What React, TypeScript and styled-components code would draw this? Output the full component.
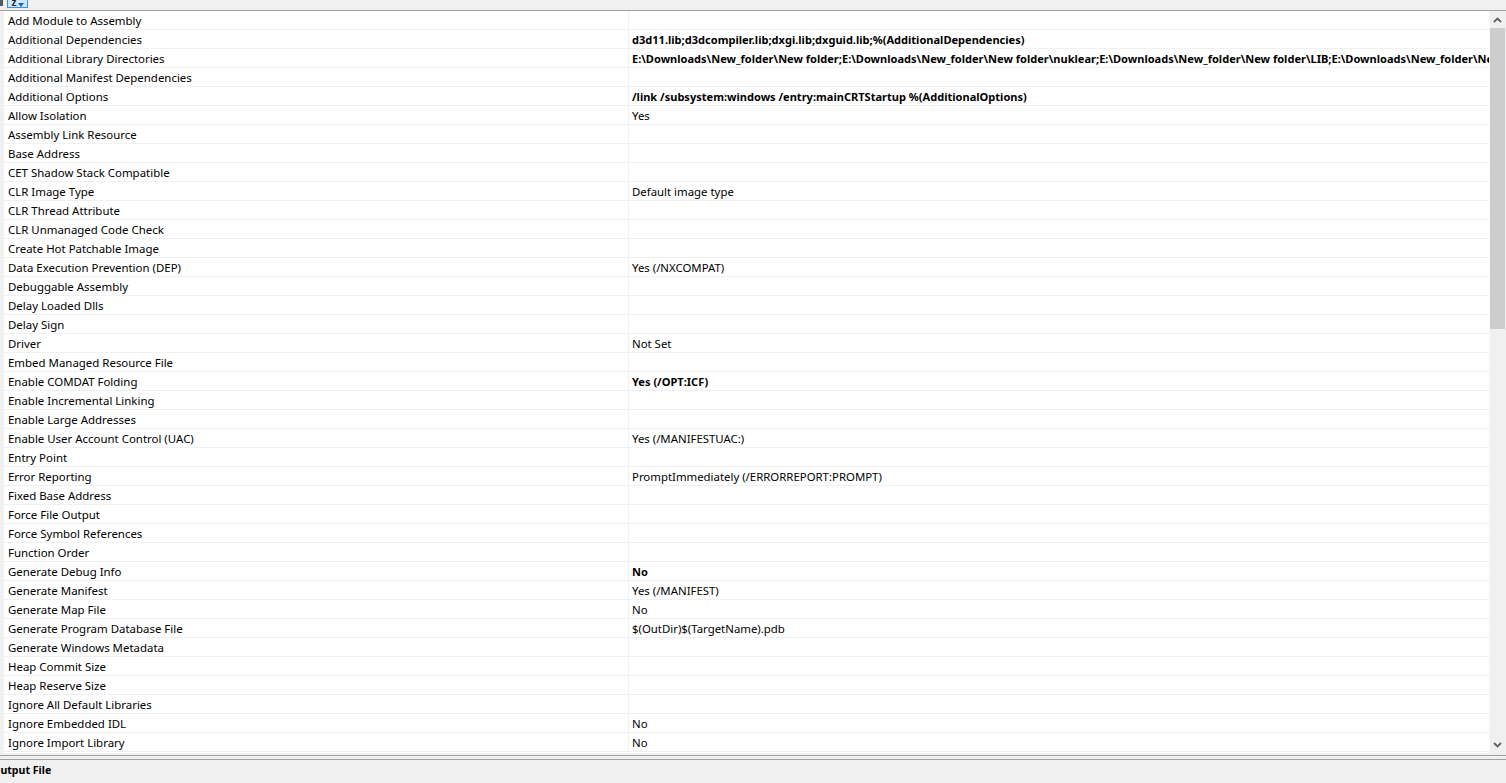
import styled, { createGlobalStyle } from "styled-components";

const GlobalStyle = createGlobalStyle`
  html, body {
    margin: 0;
    padding: 0;
    overflow: hidden;
    background: #f0f0f0;
  }
  * {
    box-sizing: border-box;
  }
`;

type Prop = { name: string; value?: string; bold?: boolean };

const props: Prop[] = [
  { name: "Add Module to Assembly" },
  { name: "Additional Dependencies", value: "d3d11.lib;d3dcompiler.lib;dxgi.lib;dxguid.lib;%(AdditionalDependencies)", bold: true },
  {
    name: "Additional Library Directories",
    value:
      "E:\\Downloads\\New_folder\\New folder;E:\\Downloads\\New_folder\\New folder\\nuklear;E:\\Downloads\\New_folder\\New folder\\LIB;E:\\Downloads\\New_folder\\New folder\\include;%(AdditionalLibraryDirectories)",
    bold: true,
  },
  { name: "Additional Manifest Dependencies" },
  { name: "Additional Options", value: "/link /subsystem:windows /entry:mainCRTStartup %(AdditionalOptions)", bold: true },
  { name: "Allow Isolation", value: "Yes" },
  { name: "Assembly Link Resource" },
  { name: "Base Address" },
  { name: "CET Shadow Stack Compatible" },
  { name: "CLR Image Type", value: "Default image type" },
  { name: "CLR Thread Attribute" },
  { name: "CLR Unmanaged Code Check" },
  { name: "Create Hot Patchable Image" },
  { name: "Data Execution Prevention (DEP)", value: "Yes (/NXCOMPAT)" },
  { name: "Debuggable Assembly" },
  { name: "Delay Loaded Dlls" },
  { name: "Delay Sign" },
  { name: "Driver", value: "Not Set" },
  { name: "Embed Managed Resource File" },
  { name: "Enable COMDAT Folding", value: "Yes (/OPT:ICF)", bold: true },
  { name: "Enable Incremental Linking" },
  { name: "Enable Large Addresses" },
  { name: "Enable User Account Control (UAC)", value: "Yes (/MANIFESTUAC:)" },
  { name: "Entry Point" },
  { name: "Error Reporting", value: "PromptImmediately (/ERRORREPORT:PROMPT)" },
  { name: "Fixed Base Address" },
  { name: "Force File Output" },
  { name: "Force Symbol References" },
  { name: "Function Order" },
  { name: "Generate Debug Info", value: "No", bold: true },
  { name: "Generate Manifest", value: "Yes (/MANIFEST)" },
  { name: "Generate Map File", value: "No" },
  { name: "Generate Program Database File", value: "$(OutDir)$(TargetName).pdb" },
  { name: "Generate Windows Metadata" },
  { name: "Heap Commit Size" },
  { name: "Heap Reserve Size" },
  { name: "Ignore All Default Libraries" },
  { name: "Ignore Embedded IDL", value: "No" },
  { name: "Ignore Import Library", value: "No" },
];

const Page = styled.div`
  width: 1506px;
  height: 783px;
  display: flex;
  flex-direction: column;
  background: #f0f0f0;
  font-family: "Noto Sans", "Open Sans", sans-serif;
  font-size: 11.45px;
  color: #000;
  overflow: hidden;
`;

const Toolbar = styled.div`
  height: 11px;
  flex: none;
  display: flex;
  align-items: flex-start;
  gap: 4px;
  border-bottom: 1px solid #a0a0a0;
  overflow: hidden;
`;

const ToolEdge = styled.div`
  width: 3px;
  height: 6px;
  background: #5a5a5a;
`;

const ToolButton = styled.div`
  width: 21px;
  height: 9px;
  margin-top: -1px;
  display: flex;
  align-items: flex-end;
  justify-content: center;
  gap: 1px;
  background: #cce8ff;
  border: 1px solid #3d8ee8;
  border-top: none;
  font-family: "Liberation Sans", sans-serif;
  font-weight: bold;
  font-size: 10px;
  line-height: 8px;
  color: #222;
`;

const Body = styled.div`
  flex: none;
  height: 742px;
  display: flex;
`;

const Gutter = styled.div`
  width: 4px;
  flex: none;
  background: #f0f0f0;
`;

const Grid = styled.div`
  width: 1486px;
  flex: none;
  background: #fff;
  overflow: hidden;
  border-right: 1px solid #f7f7f7;
`;

const Row = styled.div`
  display: grid;
  grid-template-columns: 625px 1fr;
  height: 19px;
  border-bottom: 1px solid #f0f1f5;
`;

const NameCell = styled.div`
  padding: 1px 0 0 4px;
  line-height: 17px;
  white-space: nowrap;
  overflow: hidden;
  border-right: 1px solid #f0f1f5;
`;

const ValueCell = styled.div<{ $bold?: boolean }>`
  padding: 1px 0 0 3px;
  line-height: 17px;
  white-space: nowrap;
  overflow: hidden;
  font-weight: ${(p) => (p.$bold ? 700 : 400)};
  font-size: ${(p) => (p.$bold ? "11.05px" : "11.4px")};
`;

const Scrollbar = styled.div`
  width: 15px;
  flex: none;
  display: flex;
  flex-direction: column;
  background: #f0f0f0;
`;

const ArrowButton = styled.div`
  height: 17px;
  flex: none;
  display: flex;
  align-items: center;
  justify-content: center;
`;

const Thumb = styled.div`
  height: 301px;
  flex: none;
  background: #cdcdcd;
`;

const Track = styled.div`
  flex: 1;
`;

const Splitter = styled.div`
  flex: none;
  height: 5px;
  margin-top: 2px;
  border-top: 1px solid #a0a0a0;
  border-bottom: 1px solid #a0a0a0;
  background: #f0f0f0;
`;

const Description = styled.div`
  flex: 1;
  padding-top: 2px;
  background: #f0f0f0;
  overflow: hidden;
`;

const DescTitle = styled.div`
  margin-left: -8px;
  font-weight: 700;
  font-size: 10.6px;
  line-height: 16px;
  white-space: nowrap;
`;

const Chevron = ({ up }: { up?: boolean }) => (
  <svg width="9" height="6" viewBox="0 0 9 6">
    <path
      d={up ? "M1 5 L4.5 1.5 L8 5" : "M1 1 L4.5 4.5 L8 1"}
      fill="none"
      stroke="#606060"
      strokeWidth="1.8"
    />
  </svg>
);

export default function App() {
  return (
    <>
      <GlobalStyle />
      <Page>
        <Toolbar>
          <ToolEdge />
          <ToolButton>
            <span>z</span>
            <svg width="6" height="4" viewBox="0 0 6 4">
              <path d="M0 0 L6 0 L3 4 Z" fill="#1e5fb4" />
            </svg>
          </ToolButton>
        </Toolbar>
        <Body>
          <Gutter />
          <Grid>
            {props.map((p) => (
              <Row key={p.name}>
                <NameCell>{p.name}</NameCell>
                <ValueCell $bold={p.bold}>{p.value ?? ""}</ValueCell>
              </Row>
            ))}
          </Grid>
          <Scrollbar>
            <ArrowButton>
              <Chevron up />
            </ArrowButton>
            <Thumb />
            <Track />
            <ArrowButton>
              <Chevron />
            </ArrowButton>
          </Scrollbar>
        </Body>
        <Splitter />
        <Description>
          <DescTitle>Output File</DescTitle>
        </Description>
      </Page>
    </>
  );
}
